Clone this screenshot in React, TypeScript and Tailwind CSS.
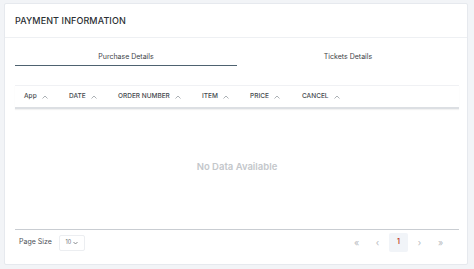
import React from "react";

const columns = ["App", "DATE", "ORDER NUMBER", "ITEM", "PRICE", "CANCEL"];
const colWidths = ["w-[45px]", "w-[49px]", "w-[84px]", "w-[48px]", "w-[52px]", "w-[60px]"];

function SortUp() {
  return (
    <svg width="6" height="4" viewBox="0 0 6 4" className="ml-[5px] text-[#a3a8ad]">
      <path d="M0.5 3.5 L3 1 L5.5 3.5" fill="none" stroke="currentColor" strokeWidth="0.9" />
    </svg>
  );
}

export default function App() {
  return (
    <div className="w-[474px] h-[269px] bg-[#f2f4f7] pt-[3px] pl-[4px] font-['Inter','Noto_Sans',sans-serif]">
      <div className="w-[464px] h-[262px] bg-white border border-[#e6e9ee] rounded-[2px] flex flex-col">
        <div className="h-[34px] border-b border-[#eef0f3] pl-[10px] flex items-center">
          <span className="text-[9px] font-medium text-[#2b2f33] tracking-[0.1px] pt-[1px]">PAYMENT INFORMATION</span>
        </div>
        <div className="pl-[10px] pr-[8px] flex flex-col flex-1">
          <div className="flex mt-[11px]">
            <div className="w-[222px] h-[17px] border-b-[1.5px] border-[#4e6270] flex items-center justify-center text-[7px] text-[#3c4146]">
              Purchase Details
            </div>
            <div className="flex-1 h-[17px] flex items-center justify-center text-[7px] text-[#3c4146]">
              Tickets Details
            </div>
          </div>
          <div className="mt-[19px] border-t border-[#f0f1f4] h-[24px] border-b-[2px] border-b-[#dcdfe3] shadow-[0_1px_1px_rgba(0,0,0,0.05)] flex items-center pl-[9px]">
            {columns.map((c, i) => (
              <div key={c} className={`${colWidths[i]} flex items-center text-[6.5px] font-medium text-[#45494e]`}>
                <span>{c}</span>
                <SortUp />
              </div>
            ))}
          </div>
          <div className="h-[121px] border-b border-[#c9cdd2] flex items-center justify-center">
            <span className="text-[9.5px] font-semibold text-[#c4c7cb] mt-[-4px]">No Data Available</span>
          </div>
          <div className="flex items-center h-[25px]">
            <span className="text-[7px] text-[#4b5055] ml-[4px]">Page Size</span>
            <div className="ml-[7px] w-[26px] h-[16px] border border-[#eceef1] rounded-[2px] flex items-center justify-center text-[5.5px] text-[#6b7075]">
              10
              <svg width="5" height="4" viewBox="0 0 5 4" className="ml-[2px]">
                <path d="M0.5 1 L2.5 3 L4.5 1" fill="none" stroke="#6b7075" strokeWidth="0.8" />
              </svg>
            </div>
            <div className="ml-auto flex items-center mr-[8px] text-[9px] text-[#b7bbc0]">
              <span className="w-[21px] text-center">«</span>
              <span className="w-[21px] text-center">‹</span>
              <span className="w-[19px] h-[19px] mx-[1px] bg-[#f1f4f8] rounded-[2px] flex items-center justify-center text-[7px] text-[#c0392b] font-semibold">1</span>
              <span className="w-[21px] text-center">›</span>
              <span className="w-[21px] text-center">»</span>
            </div>
          </div>
        </div>
      </div>
    </div>
  );
}
